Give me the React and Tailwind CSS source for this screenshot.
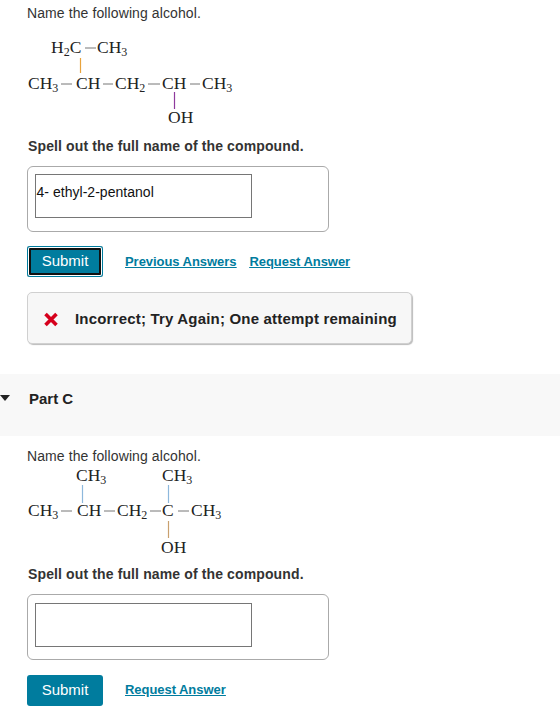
import React from "react";

const sans = { fontFamily: '"Liberation Sans", Arial, sans-serif' };

// one chemical group with proper subscripts
function Group({ x, y, children, sub, tail }) {
  return (
    <text x={x} y={y} fontSize="17.5" fill="#222" fontFamily='"Liberation Serif", serif'>
      {children}
      {sub && <tspan fontSize="12" dy="3">{sub}</tspan>}
      {tail && <tspan dy="-3">{tail}</tspan>}
    </text>
  );
}

function Dash({ x1, x2, y }) {
  return <line x1={x1} x2={x2} y1={y} y2={y} stroke="#777" strokeWidth="1" />;
}

function Bond({ x, y1, y2, color }) {
  return <line x1={x} x2={x} y1={y1} y2={y2} stroke={color} strokeWidth="1.2" />;
}

function FormulaOne() {
  return (
    <svg className="block w-[300px] h-[100px]" viewBox="0 0 300 100">
      <Group x={51} y={23} sub="2" tail="C">H</Group>
      <Dash x1={85} x2={96} y={18} />
      <Group x={97} y={23} sub="3">CH</Group>
      <Bond x={80.5} y1={28} y2={43} color="#e8a33d" />
      <Group x={28} y={59} sub="3">CH</Group>
      <Dash x1={61} x2={72} y={54} />
      <Group x={76} y={59}>CH</Group>
      <Dash x1={103} x2={113} y={54} />
      <Group x={115} y={59} sub="2">CH</Group>
      <Dash x1={148} x2={160} y={54} />
      <Group x={162} y={59}>CH</Group>
      <Dash x1={190} x2={200} y={54} />
      <Group x={202} y={59} sub="3">CH</Group>
      <Bond x={174.5} y1={62} y2={79} color="#8e3a9d" />
      <Group x={168} y={93}>OH</Group>
    </svg>
  );
}

function FormulaTwo() {
  return (
    <svg className="block w-[300px] h-[100px]" viewBox="0 0 300 100">
      <Group x={76} y={19} sub="3">CH</Group>
      <Group x={162} y={19} sub="3">CH</Group>
      <Bond x={82.5} y1={23} y2={41} color="#8db8dc" />
      <Bond x={168.5} y1={23} y2={41} color="#8db8dc" />
      <Group x={28} y={54} sub="3">CH</Group>
      <Dash x1={61} x2={72} y={49} />
      <Group x={77} y={54}>CH</Group>
      <Dash x1={104} x2={115} y={49} />
      <Group x={117} y={54} sub="2">CH</Group>
      <Dash x1={150} x2={161} y={49} />
      <Group x={162} y={54}>C</Group>
      <Dash x1={178} x2={189} y={49} />
      <Group x={191} y={54} sub="3">CH</Group>
      <Bond x={168.5} y1={59} y2={76} color="#c9a06e" />
      <Group x={161} y={91}>OH</Group>
    </svg>
  );
}

function AnswerBox({ value }) {
  return (
    <div className={`w-[302px] h-[66px] rounded-[6px] border border-[#aaaaaa] pl-[7px] ${value ? "pt-[7px]" : "pt-[8px]"}`}>
      <div className="w-[217px] h-[44px] border border-[#767676] pl-[0.5px] pt-[8px] text-[14px] leading-[18px] tracking-[0.03px] text-[#111]">
        {value}
      </div>
    </div>
  );
}

function Links({ previous }) {
  return (
    <div className={`flex gap-[13px] ml-[22px] text-[13px] font-bold tracking-[-0.05px] text-[#007c9e] underline ${previous ? "" : "-mt-[2px]"}`}>
      {previous && <a href="#">Previous Answers</a>}
      <a href="#">Request Answer</a>
    </div>
  );
}

export default function App() {
  return (
    <div className="w-[560px] h-[719px] overflow-hidden bg-white text-[#333]" style={sans}>
      <div className="pl-[27px]">
        <p className="pt-[3px] text-[14px] leading-[20px] tracking-[0.1px]">Name the following alcohol.</p>
      </div>
      <div className="mt-[7px]">
        <FormulaOne />
      </div>
      <div className="pl-[27px]">
        <p className="mt-[6px] ml-[1px] text-[14px] leading-[20px] font-bold tracking-[0.125px]">
          Spell out the full name of the compound.
        </p>
        <div className="mt-[10px]">
          <AnswerBox value="4- ethyl-2-pentanol" />
        </div>
        <div className="flex items-center mt-[14px]">
          <button className="w-[76px] h-[31px] rounded-[3px] bg-[#007c9e] text-white text-[15px] shadow-[inset_0_0_0_1px_#007c9e,inset_0_0_0_2px_#ffffff,inset_0_0_0_4px_#111111]">
            Submit
          </button>
          <Links previous />
        </div>
        <div className="flex items-center mt-[15px] w-[385px] h-[52px] pt-[2px] rounded-[5px] border border-[#d0d0d0] bg-[#f7f7f7] shadow-[1px_1px_1px_#bbbbbb] pl-[15px]">
          <svg className="w-[16px] h-[15px] shrink-0" viewBox="0 0 16 15">
            <path d="M2.5 2 L13.5 13 M13.5 2 L2.5 13" stroke="#d6001c" strokeWidth="3.6" />
          </svg>
          <span className="ml-[16px] text-[15px] font-bold text-[#222] tracking-[0.19px]">
            Incorrect; Try Again; One attempt remaining
          </span>
        </div>
      </div>
      <div className="relative mt-[30px] h-[62px] bg-[#f8f8f8] pl-[29px] pt-[15px]">
        <div className="absolute left-0 top-[21px] w-0 h-0 border-x-[5px] border-x-transparent border-t-[6px] border-t-[#222]" />
        <h3 className="text-[15px] leading-[20px] font-bold text-[#222]">Part C</h3>
      </div>
      <div className="pl-[27px]">
        <p className="mt-[10px] text-[14px] leading-[20px] tracking-[0.1px]">Name the following alcohol.</p>
      </div>
      <div className="-mt-[4px]">
        <FormulaTwo />
      </div>
      <div className="pl-[27px]">
        <p className="mt-[2px] ml-[1px] text-[14px] leading-[20px] font-bold tracking-[0.125px]">
          Spell out the full name of the compound.
        </p>
        <div className="mt-[10px]">
          <AnswerBox />
        </div>
        <div className="flex items-center mt-[15px]">
          <button className="w-[76px] h-[31px] rounded-[3px] bg-[#007c9e] text-white text-[15px]">
            Submit
          </button>
          <Links />
        </div>
      </div>
    </div>
  );
}
